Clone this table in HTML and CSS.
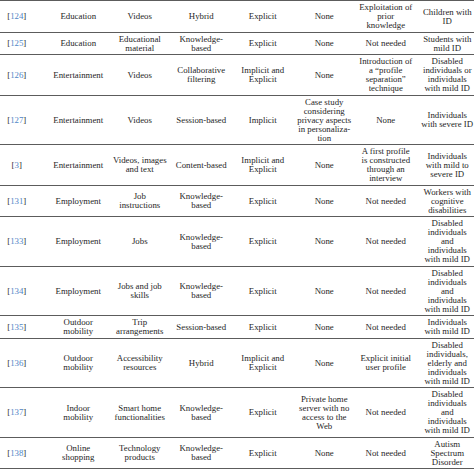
FILE: index.html
```html
<!DOCTYPE html>
<html>
<head>
<meta charset="utf-8">
<link rel="stylesheet" href="styles.css">
</head>
<body>
<table class="tbl">
<colgroup>
<col class="c"><col class="c"><col class="c"><col class="c"><col class="c"><col class="c"><col class="c"><col class="c">
</colgroup>
<tbody>
<tr><td>[<span class="ref">124</span>]</td><td>Education</td><td>Videos</td><td>Hybrid</td><td>Explicit</td><td>None</td><td>Exploitation of<br>prior<br>knowledge</td><td>Children with<br>ID</td></tr>
<tr><td>[<span class="ref">125</span>]</td><td>Education</td><td>Educational<br>material</td><td>Knowledge-<br>based</td><td>Explicit</td><td>None</td><td>Not needed</td><td>Students with<br>mild ID</td></tr>
<tr><td>[<span class="ref">126</span>]</td><td>Entertainment</td><td>Videos</td><td>Collaborative<br>filtering</td><td>Implicit and<br>Explicit</td><td>None</td><td>Introduction of<br>a “profile<br>separation”<br>technique</td><td>Disabled<br>individuals or<br>individuals<br>with mild ID</td></tr>
<tr><td>[<span class="ref">127</span>]</td><td>Entertainment</td><td>Videos</td><td>Session-based</td><td>Implicit</td><td>Case study<br>considering<br>privacy aspects<br>in personaliza-<br>tion</td><td>None</td><td>Individuals<br>with severe ID</td></tr>
<tr><td>[<span class="ref">3</span>]</td><td>Entertainment</td><td>Videos, images<br>and text</td><td>Content-based</td><td>Implicit and<br>Explicit</td><td>None</td><td>A first profile<br>is constructed<br>through an<br>interview</td><td>Individuals<br>with mild to<br>severe ID</td></tr>
<tr><td>[<span class="ref">131</span>]</td><td>Employment</td><td>Job<br>instructions</td><td>Knowledge-<br>based</td><td>Explicit</td><td>None</td><td>Not needed</td><td>Workers with<br>cognitive<br>disabilities</td></tr>
<tr><td>[<span class="ref">133</span>]</td><td>Employment</td><td>Jobs</td><td>Knowledge-<br>based</td><td>Explicit</td><td>None</td><td>Not needed</td><td>Disabled<br>individuals<br>and<br>individuals<br>with mild ID</td></tr>
<tr><td>[<span class="ref">134</span>]</td><td>Employment</td><td>Jobs and job<br>skills</td><td>Knowledge-<br>based</td><td>Explicit</td><td>None</td><td>Not needed</td><td>Disabled<br>individuals<br>and<br>individuals<br>with mild ID</td></tr>
<tr><td>[<span class="ref">135</span>]</td><td>Outdoor<br>mobility</td><td>Trip<br>arrangements</td><td>Session-based</td><td>Explicit</td><td>None</td><td>Not needed</td><td>Individuals<br>with mild ID</td></tr>
<tr><td>[<span class="ref">136</span>]</td><td>Outdoor<br>mobility</td><td>Accessibility<br>resources</td><td>Hybrid</td><td>Implicit and<br>Explicit</td><td>None</td><td>Explicit initial<br>user profile</td><td>Disabled<br>individuals,<br>elderly and<br>individuals<br>with mild ID</td></tr>
<tr><td>[<span class="ref">137</span>]</td><td>Indoor<br>mobility</td><td>Smart home<br>functionalities</td><td>Knowledge-<br>based</td><td>Explicit</td><td>Private home<br>server with no<br>access to the<br>Web</td><td>Not needed</td><td>Disabled<br>individuals<br>and<br>individuals<br>with mild ID</td></tr>
<tr><td>[<span class="ref">138</span>]</td><td>Online<br>shopping</td><td>Technology<br>products</td><td>Knowledge-<br>based</td><td>Explicit</td><td>None</td><td>Not needed</td><td>Autism<br>Spectrum<br>Disorder</td></tr>
</tbody>
</table>
</body>
</html>
```
FILE: styles.css
```css
html, body {
  margin: 0;
  padding: 0;
  background: #fff;
  overflow: hidden;
}
.tbl {
  margin-left: -14px;
  width: 492px;
  table-layout: fixed;
  border-collapse: collapse;
  font-family: "Liberation Serif", "DejaVu Serif", serif;
  font-size: 8.8px;
  line-height: 9px;
  color: #262626;
}
.c { width: 61.5px; }
.tbl td {
  text-align: center;
  vertical-align: middle;
  white-space: nowrap;
  padding: 2px 0 1.5px;
  border-top: 1px solid #5c5c5c;
  border-bottom: 1px solid #5c5c5c;
}
.ref { color: #4f86c6; }
```
